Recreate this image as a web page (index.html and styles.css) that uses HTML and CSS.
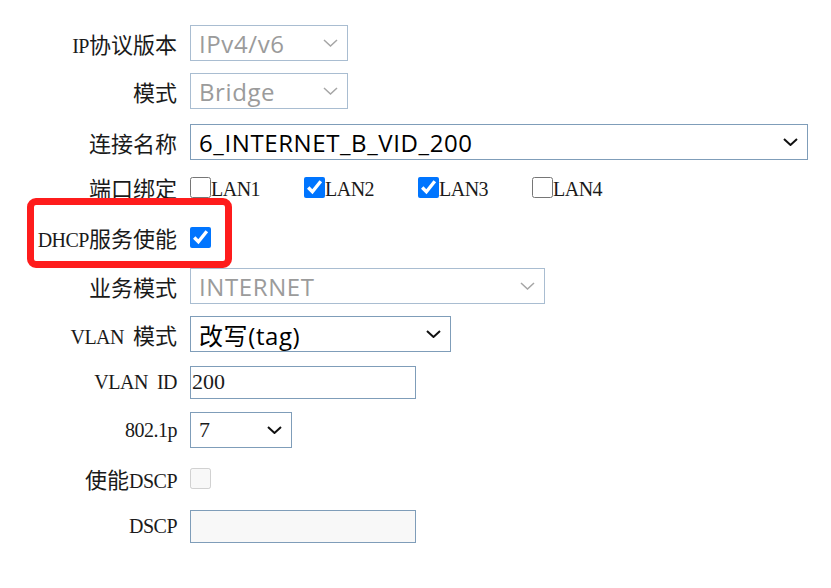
FILE: index.html
```html
<!DOCTYPE html>
<html lang="zh-CN">
<head>
<meta charset="utf-8">
<title>WAN 配置</title>
<link rel="stylesheet" href="styles.css">
</head>
<body>
<div class="form">
  <div class="row">
    <label class="lbl"><span class="en">IP</span>协议版本</label>
    <div class="select disabled w-sm"><span>IPv4/v6</span><svg class="chev" viewBox="0 0 15 8"><polyline points="1,1 7.5,7 14,1"/></svg></div>
  </div>
  <div class="row">
    <label class="lbl">模式</label>
    <div class="select disabled w-sm"><span>Bridge</span><svg class="chev" viewBox="0 0 15 8"><polyline points="1,1 7.5,7 14,1"/></svg></div>
  </div>
  <div class="row row-name">
    <label class="lbl">连接名称</label>
    <div class="select w-xl"><span>6_INTERNET_B_VID_200</span><svg class="chev" viewBox="0 0 15 8"><polyline points="1,1 7.5,7 14,1"/></svg></div>
  </div>
  <div class="row row-ports">
    <label class="lbl">端口绑定</label>
    <div class="checks">
      <label class="check"><input type="checkbox"><span class="en">LAN1</span></label>
      <label class="check"><input type="checkbox" checked><span class="en">LAN2</span></label>
      <label class="check"><input type="checkbox" checked><span class="en">LAN3</span></label>
      <label class="check"><input type="checkbox"><span class="en">LAN4</span></label>
    </div>
  </div>
  <div class="row row-dhcp">
    <label class="lbl"><span class="en">DHCP</span>服务使能</label>
    <input class="cb" type="checkbox" checked>
  </div>
  <div class="row row-service">
    <label class="lbl">业务模式</label>
    <div class="select disabled w-lg"><span>INTERNET</span><svg class="chev" viewBox="0 0 15 8"><polyline points="1,1 7.5,7 14,1"/></svg></div>
  </div>
  <div class="row">
    <label class="lbl"><span class="en">VLAN  </span>模式</label>
    <div class="select w-md"><span>改写(tag)</span><svg class="chev" viewBox="0 0 15 8"><polyline points="1,1 7.5,7 14,1"/></svg></div>
  </div>
  <div class="row">
    <label class="lbl"><span class="en">VLAN  ID</span></label>
    <input class="text" type="text" value="200">
  </div>
  <div class="row">
    <label class="lbl"><span class="en">802.1p</span></label>
    <div class="select w-xs serif"><span>7</span><svg class="chev" viewBox="0 0 15 8"><polyline points="1,1 7.5,7 14,1"/></svg></div>
  </div>
  <div class="row">
    <label class="lbl">使能<span class="en">DSCP</span></label>
    <input class="cb" type="checkbox" disabled>
  </div>
  <div class="row">
    <label class="lbl"><span class="en">DSCP</span></label>
    <input class="text" type="text" value="" disabled>
  </div>
  <div class="highlight"></div>
</div>
</body>
</html>
```
FILE: styles.css
```css
html, body {
  margin: 0;
  background: #fff;
}

body {
  font-family: "Liberation Serif", "Noto Sans CJK SC", serif;
  color: #1a1a1a;
}

.form {
  position: relative;
  display: flex;
  flex-direction: column;
  gap: 12px;
  padding-top: 25px;
}

.row {
  display: flex;
  align-items: center;
  height: 36px;
}

.row-name { margin-top: 3px; }
.row-ports { margin-top: -3px; }
.row-dhcp { margin-top: 2px; }
.row-service { margin-top: 1px; }

.lbl {
  flex: none;
  width: 177px;
  margin-right: 13px;
  text-align: right;
  font-size: 22px;
  white-space: nowrap;
}

.en {
  font-size: 20px;
  letter-spacing: -0.5px;
  white-space: pre;
}

.select {
  box-sizing: border-box;
  height: 36px;
  border: 1px solid #7f9db9;
  background: #fff;
  display: flex;
  align-items: center;
  justify-content: space-between;
  padding: 0 9px 0 8px;
  font-family: "Open Sans", "Noto Sans CJK SC", sans-serif;
  font-size: 24px;
  letter-spacing: 0.6px;
  color: #000;
  white-space: nowrap;
}

.select.serif {
  font-family: "Liberation Serif", "Noto Sans CJK SC", serif;
  font-size: 22px;
  letter-spacing: 0;
  color: #1a1a1a;
}

.select.disabled {
  color: #9b9b9b;
  border-color: #a9bdd1;
}

.w-sm { width: 158px; }
.w-xl { width: 618px; }
.w-lg { width: 355px; }
.w-md { width: 261px; }
.w-xs { width: 102px; }

.chev {
  flex: none;
  width: 15px;
  height: 8px;
  fill: none;
  stroke: #111;
  stroke-width: 2;
}

.disabled .chev {
  stroke: #a6a6a6;
  stroke-width: 1.5;
}

.checks {
  display: flex;
  align-items: center;
}

.check {
  display: flex;
  align-items: center;
  width: 114px;
  font-size: 22px;
}

.check span {
  padding-top: 5px;
}

.check input,
.cb {
  width: 21px;
  height: 21px;
  margin: 0;
  accent-color: #0075ff;
}

.text {
  box-sizing: border-box;
  width: 226px;
  height: 33px;
  margin: 0;
  padding: 0 1px;
  border: 1px solid #7f9db9;
  border-radius: 0;
  background: #fff;
  font-family: "Liberation Serif", "Noto Sans CJK SC", serif;
  font-size: 22px;
  color: #1a1a1a;
  outline: none;
}

.text:disabled {
  background: #f8f8f8;
}

.highlight {
  position: absolute;
  left: 27px;
  top: 198px;
  width: 205px;
  height: 70px;
  box-sizing: border-box;
  border: 7px solid #fe1c1c;
  border-radius: 9px;
  pointer-events: none;
}
```
